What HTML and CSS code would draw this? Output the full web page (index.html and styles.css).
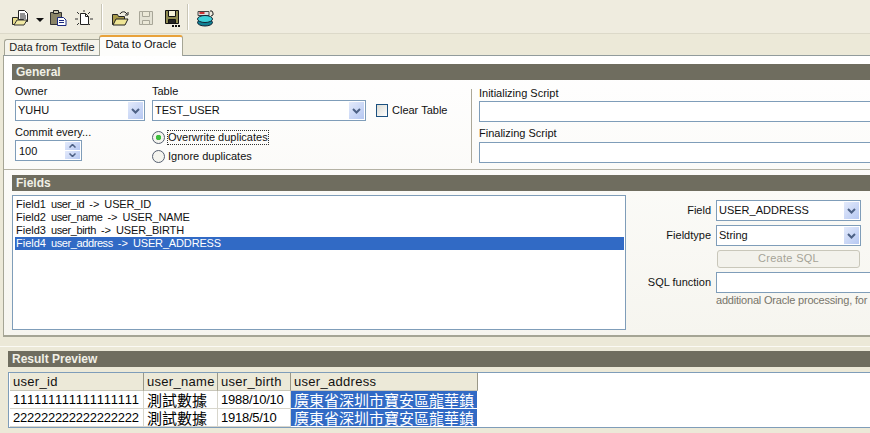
FILE: index.html
```html
<!DOCTYPE html>
<html lang="en">
<head>
<meta charset="utf-8">
<title>Data to Oracle</title>
<link rel="stylesheet" href="styles.css">
</head>
<body>
<div class="toolbar">
  <svg class="ico i1" width="18" height="16" viewBox="0 0 18 16"><path d="M6.500 .5h6l3 3v8h-9z" fill="#fff" stroke="#222"/><path d="M8 4h5M8 6h6M8 8h6" stroke="#222"/><path d="M.5 7.500h5l1 2h5v5h-11z" fill="#e6dc8c" stroke="#222"/><path d="M2 15l3-5h10l-3 5z" fill="#f1e9a4" stroke="#333"/></svg>
  <svg class="ico i2" width="8" height="4" viewBox="0 0 8 4"><path d="M0 0h8L4 4z" fill="#111"/></svg>
  <svg class="ico i3" width="17" height="16" viewBox="0 0 17 16"><path d="M.5 2.500h11v12H.5z" fill="#8a8467" stroke="#333"/><path d="M3.500 .5h5v3h-5z" fill="#c9c5ad" stroke="#222"/><path d="M7.500 7.500h6l2.500 2.500v5.500h-8.500z" fill="#fff" stroke="#1c2a80"/><path d="M9 10.500h5M9 12.500h5" stroke="#1c2a80"/></svg>
  <svg class="ico i4" width="18" height="17" viewBox="0 0 18 17"><path d="M5.500 3.500h5l3 3v8h-8z" fill="#fff" stroke="#222"/><path d="M10.500 3.500v3h3" fill="none" stroke="#222"/><path d="M2 2l2 2M9 0v2M15 2l-2 2M0 9h3M15 9h3M2 15l2-2M15 15l-1-1" stroke="#333"/></svg>
  <span class="tsep s1"></span>
  <svg class="ico i5" width="17" height="15" viewBox="0 0 17 15"><path d="M.5 3.500h5l1 2h6v8h-12z" fill="#a89a4a" stroke="#222"/><path d="M1 14l3-6h12l-3 6z" fill="#efe596" stroke="#222"/><path d="M8 3c1-2 3-2.500 5-2l2 2" fill="none" stroke="#222"/><path d="M16 1v3h-3" fill="none" stroke="#222"/></svg>
  <svg class="ico i6" width="14" height="14" viewBox="0 0 14 14"><path d="M.5 .5h13v13H.5z" fill="#e4e2d4" stroke="#a8a698"/><path d="M3.500 .5h7v5h-7zM3.500 9.500h7v4h-7z" fill="#ece9d8" stroke="#a8a698"/></svg>
  <svg class="ico i7" width="16" height="17" viewBox="0 0 16 17"><path d="M.5 .5h13v13H.5z" fill="#8e8a50" stroke="#111"/><path d="M3.500 .5h7v6h-7z" fill="#f4f1d8" stroke="#111"/><path d="M3.500 9.500h7v4h-7z" fill="#222" stroke="#111"/><path d="M7 15h2v2H7zM10 15h2v2h-2zM13 15h2v2h-2z" fill="#111"/></svg>
  <span class="tsep s2"></span>
  <svg class="ico i8" width="18" height="17" viewBox="0 0 18 17"><path d="M1 1.500h11v4H1z" fill="#ddd" stroke="#444"/><path d="M2.500 3h5" stroke="#c33" stroke-width="2"/><path d="M13 1h2l1 2v2l-2 1" fill="none" stroke="#222"/><ellipse cx="8" cy="12.500" rx="7.500" ry="3.500" fill="#0e7f93" stroke="#123"/><ellipse cx="8" cy="9" rx="7.500" ry="3.500" fill="#3fd0d8" stroke="#123"/></svg>
</div>

<div class="tabs">
  <div class="tab">Data from Textfile</div>
  <div class="tab active">Data to Oracle</div>
</div>

<div class="panel">
  <section class="general">
    <h2 class="bar">General</h2>
    <div class="gen-body">
      <div class="col-owner">
        <label class="lbl">Owner</label>
        <div class="combo w-owner"><span>YUHU</span><i class="drop"><svg width="9" height="6" viewBox="0 0 9 6"><path d="M1 1l3.500 3.500L8 1" fill="none" stroke="#4d6185" stroke-width="2"/></svg></i></div>
        <label class="lbl commit">Commit every...</label>
        <div class="spin"><span>100</span><i class="arrows"><b><svg width="7" height="4" viewBox="0 0 7 4"><path d="M.5 3.500l3-3 3 3" fill="none" stroke="#4d6185" stroke-width="1.500"/></svg></b><b><svg width="7" height="4" viewBox="0 0 7 4"><path d="M.5 .5l3 3 3-3" fill="none" stroke="#4d6185" stroke-width="1.500"/></svg></b></i></div>
      </div>
      <div class="col-table">
        <label class="lbl">Table</label>
        <div class="combo w-table"><span>TEST_USER</span><i class="drop"><svg width="9" height="6" viewBox="0 0 9 6"><path d="M1 1l3.500 3.500L8 1" fill="none" stroke="#4d6185" stroke-width="2"/></svg></i></div>
        <div class="radios">
          <div class="radio on"><i class="dot"></i><span class="focus">Overwrite duplicates</span></div>
          <div class="radio"><i class="dot"></i><span>Ignore duplicates</span></div>
        </div>
      </div>
      <div class="col-clear"><i class="check"></i><span>Clear Table</span></div>
      <div class="divider"></div>
      <div class="col-script">
        <label class="lbl">Initializing Script</label>
        <div class="field h-script"></div>
        <label class="lbl final">Finalizing Script</label>
        <div class="field h-script"></div>
      </div>
    </div>
  </section>

  <section class="fields">
    <h2 class="bar">Fields</h2>
    <div class="fields-body">
      <div class="list">
        <div class="item"><span>Field1</span><span>user_id</span><span>-&gt;</span><span>USER_ID</span></div>
        <div class="item"><span>Field2</span><span>user_name</span><span>-&gt;</span><span>USER_NAME</span></div>
        <div class="item"><span>Field3</span><span>user_birth</span><span>-&gt;</span><span>USER_BIRTH</span></div>
        <div class="item sel"><span>Field4</span><span>user_address</span><span>-&gt;</span><span>USER_ADDRESS</span></div>
      </div>
      <div class="props">
        <div class="prop"><label>Field</label><div class="combo w-prop"><span>USER_ADDRESS</span><i class="drop"><svg width="9" height="6" viewBox="0 0 9 6"><path d="M1 1l3.500 3.500L8 1" fill="none" stroke="#4d6185" stroke-width="2"/></svg></i></div></div>
        <div class="prop"><label>Fieldtype</label><div class="combo w-prop"><span>String</span><i class="drop"><svg width="9" height="6" viewBox="0 0 9 6"><path d="M1 1l3.500 3.500L8 1" fill="none" stroke="#4d6185" stroke-width="2"/></svg></i></div></div>
        <div class="prop btn-row"><div class="btn">Create SQL</div></div>
        <div class="prop sql"><label>SQL function</label><div class="field w-sql"></div></div>
        <div class="hint">additional Oracle processing, for</div>
      </div>
    </div>
  </section>
</div>

<section class="result">
  <h2 class="bar">Result Preview</h2>
  <div class="grid-wrap">
    <table class="grid">
      <thead><tr><th class="c1">user_id</th><th class="c2">user_name</th><th class="c3">user_birth</th><th class="c4">user_address</th></tr></thead>
      <tbody>
        <tr><td class="num">111111111111111111</td><td class="cjk">測試數據</td><td class="date">1988/10/10</td><td class="cjk hl">廣東省深圳市寶安區龍華鎮</td></tr>
        <tr><td class="num">222222222222222222</td><td class="cjk">測試數據</td><td class="date">1918/5/10</td><td class="cjk hl">廣東省深圳市寶安區龍華鎮</td></tr>
      </tbody>
    </table>
  </div>
</section>
</body>
</html>
```

FILE: styles.css
```css
* { box-sizing: border-box; }
html, body { margin: 0; height: 433px; overflow: hidden; }
body { background: #ece9d8; font: 11px/13px "Liberation Sans", Arial, sans-serif; color: #111; width: 870px; }
i { display: block; font-style: normal; }

.toolbar { height: 34px; display: flex; align-items: center; background: #efecdf; border-bottom: 1px solid #dcd9c9; padding: 3px 0 0 12px; }
.ico { display: block; flex: none; }
.i1 { margin-right: 6px; }
.i2 { margin-right: 6px; margin-top: 3px; }
.i3 { margin-right: 8px; }
.i4 { margin-right: 8px; }
.tsep { width: 2px; height: 26px; margin-top: -3px; background: linear-gradient(90deg, #c9c6b6 50%, #fff 50%); flex: none; }
.s1 { margin-right: 9px; }
.i5 { margin-right: 10px; }
.i6 { margin-right: 12px; }
.i7 { margin-right: 6px; }
.s2 { margin-right: 8px; }

.tabs { height: 21px; display: flex; align-items: flex-end; padding-left: 4px; }
.tab { height: 16px; width: 95px; text-align: center; line-height: 15px; background: #f5f4ec; border: 1px solid #a5a595; border-bottom: 0; border-right: 0; border-radius: 3px 0 0 0; color: #222; }
.tab.active { height: 21px; width: 84px; background: #fdfdfb; border: 1px solid #a5a595; border-top: 2px solid #e8a23c; border-bottom: 0; border-radius: 3px 3px 0 0; line-height: 15px; margin-bottom: -1px; position: relative; color: #111; }

.panel { height: 282px; border-top: 1px solid #919b9c; border-left: 1px solid #a5a595; margin-left: 3px; background: linear-gradient(#fff, #f6f5ef); padding-top: 8px; border-bottom: 2px solid #a5a595; }
.bar { margin: 0; height: 16px; font: bold 12px/17px "Liberation Sans", Arial, sans-serif; color: #f1f0e6; background: #6f6d5f; padding-left: 4px; }
.general { padding-left: 8px; }
.gen-body { display: flex; height: 90px; margin-left: -8px; padding-left: 11px; border-bottom: 1px solid #b4b2a4; }
.lbl { display: block; height: 13px; }
.col-owner { width: 137px; padding-top: 5px; flex: none; }
.col-table { width: 224px; padding-top: 5px; flex: none; }
.col-clear { width: 95px; display: flex; align-items: center; gap: 4px; height: 13px; margin-top: 24px; flex: none; white-space: nowrap; }
.combo { display: flex; justify-content: space-between; align-items: center; height: 21px; margin-top: 2px; border: 1px solid #7f9db9; background: #fff; padding-left: 2px; font-size: 11px; }
.w-owner { width: 130px; }
.w-table { width: 214px; }
.drop { width: 15px; height: 17px; margin-right: 1px; display: flex; align-items: center; justify-content: center; background: linear-gradient(135deg, #e3eafb, #b6c8f2); }
.commit { margin-top: 5px; }
.spin { width: 67px; height: 21px; margin-top: 1px; border: 1px solid #7f9db9; background: #fff; display: flex; justify-content: space-between; padding: 1px 1px 1px 3px; line-height: 18px; font-size: 11px; }
.arrows { width: 15px; display: flex; flex-direction: column; gap: 1px; }
.arrows b { flex: 1; display: flex; align-items: center; justify-content: center; background: linear-gradient(135deg, #e3eafb, #b6c8f2); }
.radios { padding-top: 7px; }
.radio { display: flex; align-items: center; gap: 3px; height: 19px; }
.dot { width: 13px; height: 13px; border: 1px solid #555f70; border-radius: 50%; background: #f4f4ee; }
.radio.on .dot { background: radial-gradient(circle, #3fbf3f 0 2.500px, #f4f4ee 3px); }
.focus { outline: 1px dotted #333; }
.check { width: 12px; height: 13px; flex: none; border: 1px solid #1c5180; background: linear-gradient(135deg, #dcdcd4, #fff); }
.divider { width: 1px; height: 74px; margin-top: 9px; background: #aca899; margin-right: 7px; flex: none; }
.col-script { flex: none; width: 500px; padding-top: 7px; }
.field { border: 1px solid #7f9db9; background: #fff; }
.h-script { height: 21px; margin-top: 1px; }
.final { margin-top: 5px; }
.final + .h-script { margin-top: 2px; }

.fields { padding-left: 8px; padding-top: 5px; }
.fields-body { display: flex; margin-left: -8px; padding: 4px 0 0 8px; }
.list { width: 614px; height: 135px; border: 1px solid #7f9db9; background: #fff; padding: 2px 1px 2px 2px; flex: none; }
.item { display: flex; gap: 5px; height: 13px; padding-left: 1px; white-space: nowrap; line-height: 13px; }
.item span:nth-child(2) { letter-spacing: -.4px; }
.item span:nth-child(4) { letter-spacing: -.15px; }
.item.sel { background: #316ac5; color: #fff; }
.props { width: 500px; flex: none; padding-top: 5px; }
.prop { display: flex; align-items: center; height: 21px; margin-bottom: 4px; }
.prop label { width: 85px; text-align: right; margin-right: 5px; flex: none; }
.w-prop { width: 145px; margin-top: 0; }
.btn-row { padding-left: 91px; height: 18px; margin-bottom: 4px; }
.btn { width: 143px; height: 18px; border: 1px solid #c9c7ba; border-radius: 3px; background: #f3f2ec; text-align: center; line-height: 15px; color: #a5a397; letter-spacing: .3px; }
.w-sql { width: 300px; height: 21px; }
.sql { margin-bottom: 1px; }
.hint { padding-left: 90px; color: #77756a; white-space: nowrap; letter-spacing: -.2px; }

.result { margin-top: 9px; border-top: 1px solid #fbfaf4; padding: 4px 0 0 8px; }
.grid-wrap { margin-top: 5px; height: 56px; background: #fff; border: 1px solid #7f9db9; border-right: 0; padding-left: 1px; }
.grid { border-collapse: separate; border-spacing: 0; table-layout: fixed; width: 468px; font: 13px/17px "Liberation Sans", Arial, sans-serif; letter-spacing: .3px; font-kerning: none; }
.grid th { height: 18px; padding: 0 3px; font-weight: normal; text-align: left; background: #ece9d8; border-right: 1px solid #9a9888; border-bottom: 1px solid #c9c7ba; white-space: nowrap; }
.grid td { height: 18px; padding: 0 3px; border-right: 1px solid #d8d6cc; border-bottom: 1px solid #d8d6cc; white-space: nowrap; color: #000; }
.c1 { width: 134px; }
.c2 { width: 74px; }
.c3 { width: 73px; }
.c4 { width: 187px; }
.num { letter-spacing: -.25px; }
.date { letter-spacing: -.25px; }
.cjk { font-family: "Noto Sans CJK TC", sans-serif; font-size: 15px; letter-spacing: 0; line-height: 17px; }
.grid td.hl { background: #316ac5; color: #fff; border-color: #fff; }
```
